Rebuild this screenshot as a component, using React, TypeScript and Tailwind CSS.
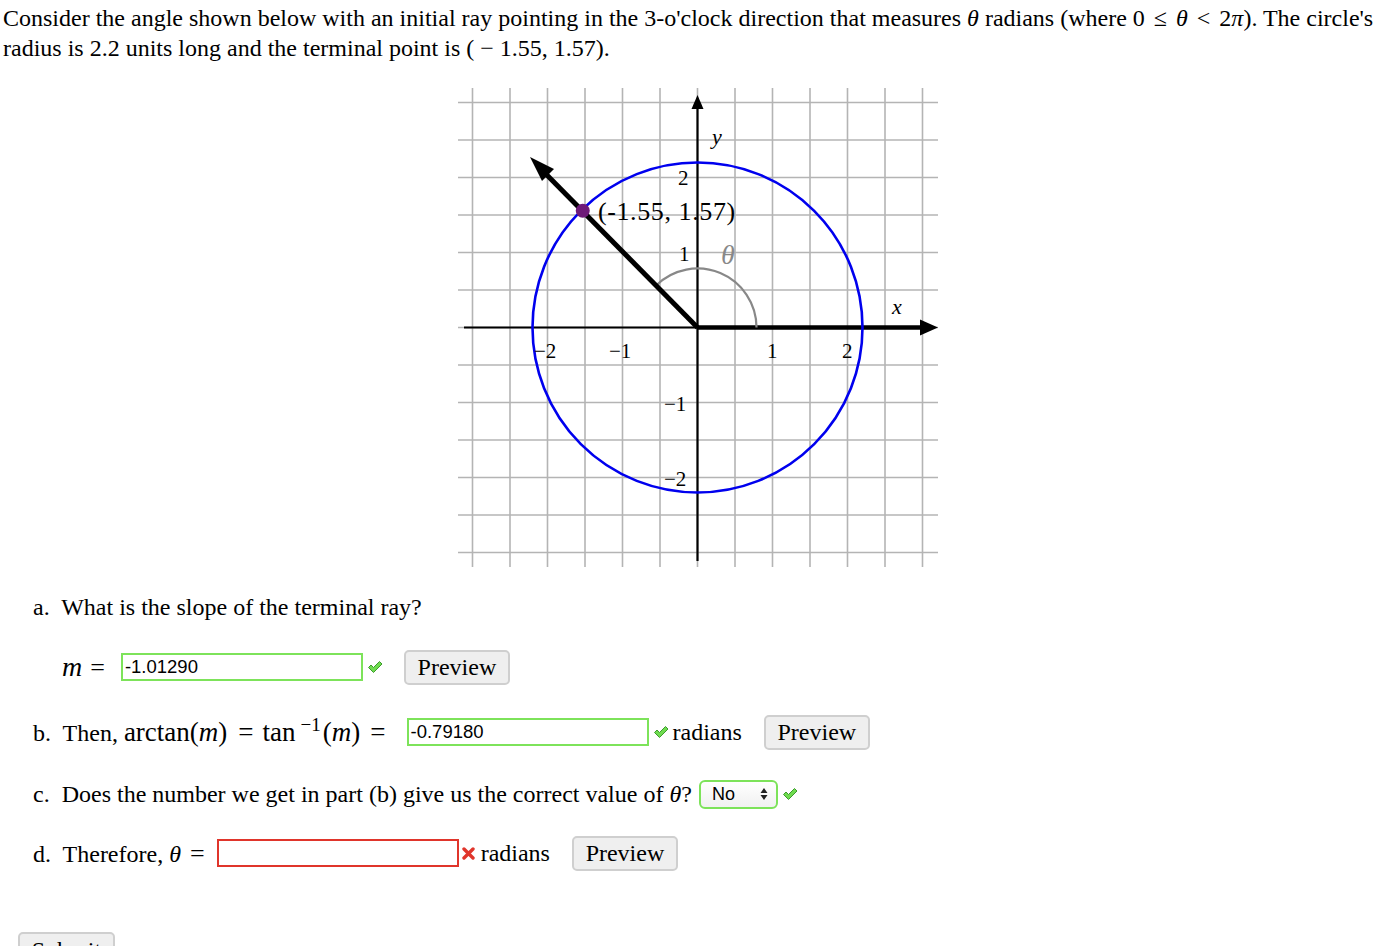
import React from 'react';

const serif = { fontFamily: '"Liberation Serif", "Times New Roman", serif' };
const sans = { fontFamily: '"Liberation Sans", Arial, sans-serif' };

const Check = () => (
  <svg width="16" height="14" viewBox="0 0 16 14" className="mx-[4px] shrink-0">
    <path d="M1.5 7.5 L4 5 L6.5 7.5 L12.5 1.5 L15 4 L6.5 12.5 Z" fill="#6fdc4f" stroke="#3d9a2d" strokeWidth="1" strokeLinejoin="round" />
  </svg>
);

const Cross = () => (
  <svg width="13" height="13" viewBox="0 0 13 13" className="ml-[3px] mr-[6px] shrink-0">
    <path d="M2 2 L11 11 M11 2 L2 11" stroke="#e0352b" strokeWidth="3.4" strokeLinecap="round" />
  </svg>
);

const PreviewButton = () => (
  <button className="h-[35px] w-[106px] rounded-[5px] border-2 border-[#cfcfcf] bg-[#efefef] text-[24px] text-black leading-none">
    Preview
  </button>
);

const AnswerBox = ({ value, state }: { value: string; state: 'ok' | 'bad' }) => (
  <div
    className={`flex h-[28px] w-[242px] items-center border-2 bg-white px-[2px] text-[18.5px] text-black ${
      state === 'ok' ? 'border-[#7de35a]' : 'border-[#e0352b]'
    }`}
    style={sans}
  >
    {value}
  </div>
);

const Graph = () => {
  const ox = 239.5;
  const oy = 242.5;
  const step = 37.5;
  const ks = [-6, -5, -4, -3, -2, -1, 0, 1, 2, 3, 4, 5, 6];
  const px = ox - 1.55 * 75;
  const py = oy - 1.57 * 75;
  const a = (134.6 * Math.PI) / 180;
  return (
    <svg width="480" height="485" viewBox="0 0 480 485" style={serif}>
      {ks.map((k) => (
        <line key={'v' + k} x1={ox + k * step} y1={3} x2={ox + k * step} y2={482} stroke="#b4b4b4" strokeWidth="1.6" />
      ))}
      {ks.map((k) => (
        <line key={'h' + k} x1={0} y1={oy + k * step} x2={480} y2={oy + k * step} stroke="#b4b4b4" strokeWidth="1.6" />
      ))}
      {/* axes */}
      <line x1={6} y1={oy} x2={ox} y2={oy} stroke="#000" strokeWidth="2.2" />
      <line x1={ox} y1={oy} x2={465} y2={oy} stroke="#000" strokeWidth="4.5" />
      <polygon points={`480,${oy} 462,${oy - 8} 462,${oy + 8}`} fill="#000" />
      <line x1={ox} y1={22} x2={ox} y2={476} stroke="#000" strokeWidth="2.2" />
      <polygon points={`${ox},10 ${ox - 6},24 ${ox + 6},24`} fill="#000" />
      {/* circle */}
      <circle cx={ox} cy={oy} r={165} fill="none" stroke="#0000ee" strokeWidth="2.6" />
      {/* theta arc */}
      <path
        d={`M ${ox + 59} ${oy} A 59 59 0 0 0 ${ox + 59 * Math.cos(a)} ${oy - 59 * Math.sin(a)}`}
        fill="none"
        stroke="#888"
        strokeWidth="2.2"
      />
      {/* terminal ray */}
      <line x1={ox} y1={oy} x2={82} y2={83} stroke="#000" strokeWidth="5" />
      <polygon points="72,72 96,84 84,96" fill="#000" />
      <circle cx={px + 1.5} cy={py + 1} r={7} fill="#6e1a78" />
      {/* labels */}
      <text x={140} y={135} fontSize="26" letterSpacing="0.6" fill="#000">(-1.55, 1.57)</text>
      <text x={220} y={100} fontSize="21" fill="#000">2</text>
      <text x={221} y={176} fontSize="21" fill="#000">1</text>
      <text x={206} y={326} fontSize="21" fill="#000">−1</text>
      <text x={206} y={401} fontSize="21" fill="#000">−2</text>
      <text x={76} y={273} fontSize="21" fill="#000">−2</text>
      <text x={151} y={273} fontSize="21" fill="#000">−1</text>
      <text x={309} y={273} fontSize="21" fill="#000">1</text>
      <text x={384} y={273} fontSize="21" fill="#000">2</text>
      <text x={254} y={59} fontSize="22" fontStyle="italic" fill="#000">y</text>
      <text x={434} y={229} fontSize="22" fontStyle="italic" fill="#000">x</text>
      <text x={263} y={179} fontSize="28" fontStyle="italic" fill="#888">θ</text>
    </svg>
  );
};

const App: React.FC = () => {
  return (
    <div className="min-h-[946px] w-[1396px] overflow-hidden bg-white text-black" style={serif}>
      {/* Problem statement */}
      <p className="whitespace-nowrap pl-[3px] pt-[3px] text-[24px] leading-[30px]">
        Consider the angle shown below with an initial ray pointing in the 3-o'clock direction that measures{' '}
        <i>θ</i> radians (where 0<span className="mx-[9px]">≤</span>
        <i>θ</i>
        <span className="mx-[9px]">&lt;</span>2<i>π</i>). The circle's
        <br />
        radius is 2.2 units long and the terminal point is (<span className="mx-[6px]">−</span>1.55, 1.57).
      </p>

      {/* Graph */}
      <div className="mt-[22px] flex justify-center">
        <Graph />
      </div>

      {/* Parts */}
      <div className="pl-[33px] text-[24px]">
        <div className="mt-[22px] leading-[30px]">a.&nbsp; What is the slope of the terminal ray?</div>

        <div className="mt-[27px] flex h-[36px] items-center pl-[29px]">
          <i className="text-[28px]">m</i>
          <span className="ml-[8px] mr-[16px] text-[26px]">=</span>
          <AnswerBox value="-1.01290" state="ok" />
          <Check />
          <div className="ml-[17px]">
            <PreviewButton />
          </div>
        </div>

        <div className="mt-[29px] flex h-[36px] items-center">
          <span className="whitespace-nowrap">
            b.&nbsp; Then,{' '}
            <span className="text-[27px]">
              arctan(<i>m</i>)<span className="ml-[11px] mr-[9px]">=</span>tan
              <sup className="ml-[5px] mr-[2px] text-[19px]">−1</sup>(<i>m</i>)
              <span className="ml-[10px]">=</span>
            </span>
          </span>
          <div className="ml-[21px]">
            <AnswerBox value="-0.79180" state="ok" />
          </div>
          <Check />
          <span>radians</span>
          <div className="ml-[22px]">
            <PreviewButton />
          </div>
        </div>

        <div className="mt-[29px] flex h-[30px] items-center">
          <span className="whitespace-nowrap">
            c.&nbsp; Does the number we get in part (b) give us the correct value of <i>θ</i>?
          </span>
          <div
            className="ml-[7px] flex h-[29px] w-[79px] items-center justify-between rounded-[6px] border-2 border-[#7de35a] bg-gradient-to-b from-white to-[#f1f1f1] pl-[11px] pr-[8px] text-[18px]"
            style={sans}
          >
            <span>No</span>
            <svg width="8" height="14" viewBox="0 0 8 14">
              <path d="M4 1 L7.5 6 L0.5 6 Z M4 13 L7.5 8 L0.5 8 Z" fill="#222" />
            </svg>
          </div>
          <Check />
        </div>

        <div className="mt-[26px] flex h-[36px] items-center">
          <span className="whitespace-nowrap">
            d.&nbsp; Therefore, <i>θ</i>
            <span className="ml-[9px] text-[26px]">=</span>
          </span>
          <div className="ml-[12px]">
            <AnswerBox value="" state="bad" />
          </div>
          <Cross />
          <span>radians</span>
          <div className="ml-[22px]">
            <PreviewButton />
          </div>
        </div>
      </div>

      <div className="mt-[61px] pl-[18px]">
        <button className="h-[35px] w-[97px] rounded-[5px] border-2 border-[#cfcfcf] bg-[#efefef] text-[24px] leading-none">
          Submit
        </button>
      </div>
    </div>
  );
};

export default App;
